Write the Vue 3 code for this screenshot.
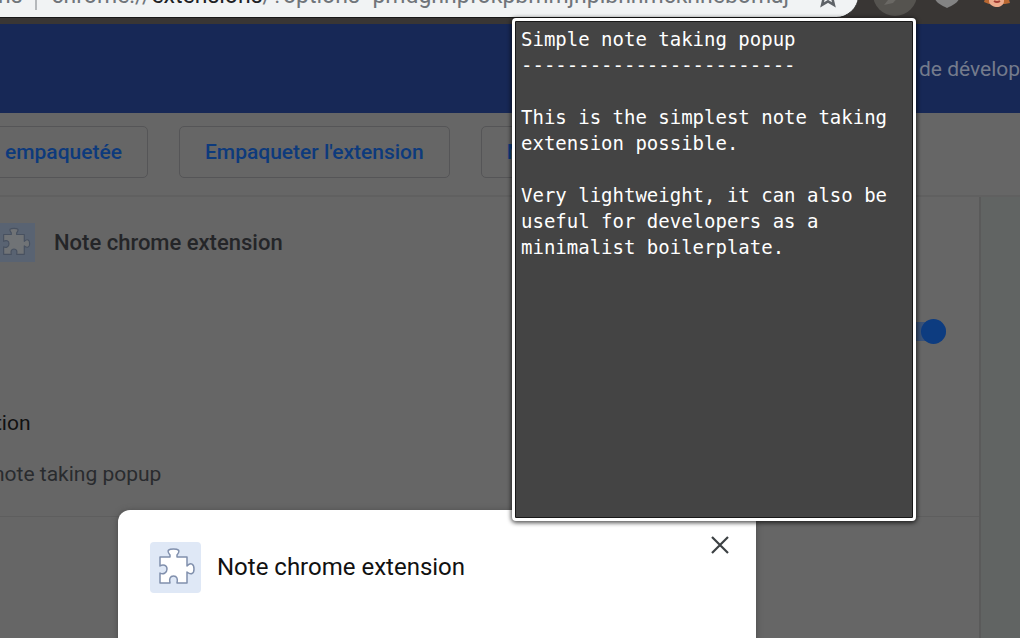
<script setup>
import { ref } from 'vue'

const enabled = ref(true)
const note = ref(`Simple note taking popup
------------------------

This is the simplest note taking
extension possible.

Very lightweight, it can also be
useful for developers as a
minimalist boilerplate.`)
</script>

<template>
  <div class="page">
    <header class="browser-bar">
      <div class="address">
        <span class="origin">ns</span>
        <span class="divider"></span>
        <span class="url">chrome://<b>extensions</b>/?options=pmdghhpfokpbmmjhplbhhmckhhebomaj</span>
        <button class="star" aria-label="Bookmark">
          <svg viewBox="0 0 24 24" width="24" height="24"><path d="M12 3l2.7 6.2 6.7.6-5.1 4.4 1.6 6.6-5.9-3.5-5.9 3.5 1.6-6.6-5.1-4.4 6.7-.6z" fill="none" stroke="#5f6368" stroke-width="2.5" /></svg>
        </button>
      </div>
      <div class="tools">
        <svg viewBox="0 0 150 24" width="150" height="24" aria-hidden="true">
          <circle cx="25" cy="-6" r="22" fill="#55534f" />
          <path d="M14 5L22-5l7-5 2 4-8 9z" fill="#6a6864" />
          <path d="M65-6h24v4c0 4-6 7-12 10C71 5 65 2 65-2z" fill="#838383" />
          <path d="M116-4h22l2 7-5 1H119l-5-2z" fill="#b96832" />
          <path d="M119-5h15v6c0 4-4 6-7 6s-8-2-8-6z" fill="#edaa8b" />
          <path d="M124 1q3 2 6 0" fill="none" stroke="#a33e35" stroke-width="2" />
        </svg>
      </div>
    </header>

    <div class="banner"><span>de développeur</span></div>

    <nav class="toolbar">
      <button class="action">empaquetée</button>
      <button class="action">Empaqueter l'extension</button>
      <button class="action">Mettre à jour</button>
    </nav>

    <main class="content">
      <section class="details">
        <div class="title-row">
          <span class="badge small">
            <svg viewBox="0 0 51 51" width="51" height="51" aria-hidden="true"><path class="piece" d="M10 15H20V13C16 8 19 7 23.5 7S31 8 27 13V15H37V24C41 20 44 22 44 27S41 33 37 30V41H27C28 37 27 34 23.5 34S19 37 20 41H10V31C13 33 17 31 17 27S13 22 10 24Z" /></svg>
          </span>
          <h2>Note chrome extension</h2>
        </div>
        <label class="switch" for="enabled-switch">
          <input id="enabled-switch" v-model="enabled" type="checkbox" aria-label="Note chrome extension" />
          <span class="track"></span>
        </label>
        <div class="description">
          <h3>tion</h3>
          <p>note taking popup</p>
        </div>
        <div class="rest"></div>
      </section>
      <aside class="gutter"></aside>
    </main>

    <section class="dialog" role="dialog" aria-labelledby="dialog-title">
      <span class="badge">
        <svg viewBox="0 0 51 51" width="51" height="51" aria-hidden="true"><path class="piece" d="M10 15H20V13C16 8 19 7 23.5 7S31 8 27 13V15H37V24C41 20 44 22 44 27S41 33 37 30V41H27C28 37 27 34 23.5 34S19 37 20 41H10V31C13 33 17 31 17 27S13 22 10 24Z" /></svg>
      </span>
      <h1 id="dialog-title">Note chrome extension</h1>
      <button class="close" aria-label="Close">
        <svg viewBox="0 0 20 20" width="20" height="20"><path d="M2 2L18 18M18 2L2 18" stroke="#3c4043" stroke-width="2.2" /></svg>
      </button>
    </section>

    <textarea v-model="note" class="note" aria-label="Note" spellcheck="false"></textarea>
  </div>
</template>

<style scoped>
* { box-sizing: border-box; }
.page {
  position: relative;
  display: flex;
  flex-direction: column;
  height: 100vh;
  overflow: hidden;
  background: #666;
  color: #202124;
  font-family: Roboto, "Liberation Sans", sans-serif;
}
h1, h2, h3, p { margin: 0; white-space: nowrap; }
button { font-family: inherit; padding: 0; cursor: pointer; }
svg { display: block; }

.browser-bar {
  display: flex;
  justify-content: space-between;
  flex: none;
  height: 24px;
  overflow: hidden;
  background: #393634;
}
.address {
  display: flex;
  align-items: center;
  flex: 1;
  height: 44px;
  margin-top: -26px;
  padding-right: 18px;
  border-bottom: 1px solid #181818;
  border-radius: 0 22px 22px 0;
  background: #f1f3f4;
  color: #70757a;
  font-size: 23px;
  white-space: nowrap;
}
.origin { margin-left: -2px; }
.divider { width: 2px; height: 28px; margin: 0 15px 0 12px; background: #b5b8bb; }
.url b { color: #202124; font-weight: 400; }
.star { margin-left: auto; border: 0; background: none; }
.tools { flex: none; width: 150px; margin-left: 12px; }

.banner {
  display: flex;
  justify-content: flex-end;
  align-items: center;
  flex: none;
  height: 89px;
  overflow: hidden;
  background: #172856;
  color: #747b8c;
  font-size: 21px;
}
.banner span { width: 101px; white-space: nowrap; }

.toolbar {
  display: flex;
  align-items: center;
  gap: 31px;
  flex: none;
  height: 84px;
  padding-bottom: 5px;
  border-bottom: 2px solid #606060;
  background: #666;
}
.action {
  flex: none;
  height: 52px;
  padding: 0 25px;
  border: 1px solid #555557;
  border-radius: 5px;
  background: transparent;
  color: #0d3a7c;
  font-size: 21px;
  font-weight: 500;
}
.action:first-child { margin-left: -21px; }

.content { display: flex; flex: 1; min-height: 0; }
.details { display: flex; flex-direction: column; flex: 1; }
.gutter { width: 41px; border-left: 2px solid #5a5a5a; background: #616463; }
.title-row { display: flex; align-items: center; gap: 19px; height: 90px; }
.badge {
  display: block;
  flex: none;
  width: 51px;
  height: 51px;
  border-radius: 4px;
  background: #dfe8f6;
}
.piece { fill: #fff; stroke: #8190ad; stroke-width: 1.5; stroke-linejoin: round; }
.small { width: 39px; height: 39px; margin-left: -4px; border-radius: 0; background: #596372; }
.small svg { width: 39px; height: 39px; }
.small .piece { fill: #707376; stroke: #485160; }
h2 { color: #242528; font-size: 22px; font-weight: 500; }
.switch { display: flex; justify-content: flex-end; align-items: center; height: 88px; padding-right: 33px; }
.switch input { position: absolute; opacity: 0; }
.track {
  position: relative;
  width: 42px;
  height: 19px;
  border-radius: 10px;
  background: #3a5277;
}
.track::after {
  content: "";
  position: absolute;
  top: -3px;
  right: 0;
  width: 25px;
  height: 25px;
  border-radius: 50%;
  background: #0d3c80;
}
.description { padding: 34px 0 0; height: 142px; border-bottom: 1px solid #5e5e5e; }
h3 { margin-left: -5px; color: #111; font-size: 21px; font-weight: 400; line-height: 28px; }
.description p { margin: 23px 0 0 -7px; color: #292b2e; font-size: 21px; line-height: 28px; }
.rest { flex: 1; }

.dialog {
  position: absolute;
  top: 510px;
  right: 264px;
  bottom: -20px;
  left: 118px;
  display: flex;
  align-items: flex-start;
  gap: 16px;
  padding: 32px 26px 0 32px;
  border-radius: 12px;
  background: #fff;
  box-shadow: 0 1px 6px #3339;
}
h1 { flex: 1; color: #111; font-size: 24px; font-weight: 400; line-height: 50px; }
.close { margin-top: -7px; border: 0; background: none; }

.note {
  position: absolute;
  top: 18px;
  right: 104px;
  width: 404px;
  height: 503px;
  padding: 5px 6px;
  border: 3px solid #fff;
  border-radius: 4px;
  outline: 0;
  resize: none;
  overflow: hidden;
  background: #444;
  color: #fff;
  font: 19px/26px "DejaVu Sans Mono", monospace;
  white-space: pre-wrap;
  box-shadow: inset 0 0 0 1px #181818, 0 1px 4px 1px #000a;
}
</style>

<style>
body { margin: 0; }
</style>
